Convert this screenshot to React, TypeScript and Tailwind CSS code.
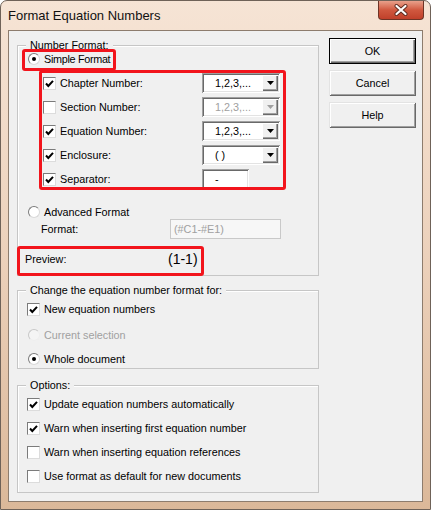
import React from "react";

const sunken =
  "shadow-[inset_1px_1px_0_#a0a0a0,inset_-1px_-1px_0_#ffffff,inset_2px_2px_0_#696969,inset_-2px_-2px_0_#e3e3e3]";

function CheckBox({ checked }: { checked?: boolean }) {
  return (
    <span className="w-[13px] h-[13px] shrink-0 bg-white border border-t-[#7b7b7b] border-l-[#7b7b7b] border-r-[#dcdcdc] border-b-[#dcdcdc] flex items-center justify-center">
      {checked && (
        <svg width="11" height="11" viewBox="0 0 11 11">
          <polyline points="2,5.5 4.3,8 9,2.8" fill="none" stroke="#000" strokeWidth="2" />
        </svg>
      )}
    </span>
  );
}

function Radio({ checked, disabled }: { checked?: boolean; disabled?: boolean }) {
  return (
    <span
      className={
        "w-[12px] h-[12px] shrink-0 rounded-full border flex items-center justify-center " +
        (disabled
          ? "bg-[#f4f4f4] border-t-[#c8c8c8] border-l-[#c8c8c8] border-r-[#eeeeee] border-b-[#eeeeee]"
          : "bg-white border-t-[#7b7b7b] border-l-[#7b7b7b] border-r-[#d8d8d8] border-b-[#d8d8d8]")
      }
    >
      {checked && <span className="w-[4px] h-[4px] rounded-full bg-black" />}
    </span>
  );
}

function Combo({ value, disabled }: { value: string; disabled?: boolean }) {
  return (
    <div className={"w-[78px] h-[20px] bg-white flex items-center p-[2px] " + sunken}>
      <span className={"flex-1 pl-[11px] " + (disabled ? "text-[#a0a0a0]" : "text-black")}>{value}</span>
      <span className="w-[16px] h-[16px] bg-[#f0f0f0] flex items-center justify-center shadow-[inset_1px_1px_0_#ffffff,inset_-1px_-1px_0_#696969,inset_-2px_-2px_0_#a0a0a0]">
        <svg width="7" height="4" viewBox="0 0 7 4">
          <polygon points="0,0 7,0 3.5,4" fill={disabled ? "#a0a0a0" : "#000"} />
        </svg>
      </span>
    </div>
  );
}

function Button({ label, isDefault }: { label: string; isDefault?: boolean }) {
  return (
    <div
      className={
        "h-[26px] w-[87px] flex items-center justify-center bg-[#f0f0f0] text-black " +
        (isDefault
          ? "border border-black shadow-[inset_1px_1px_0_#ffffff,inset_-1px_-1px_0_#696969,inset_-2px_-2px_0_#a0a0a0]"
          : "shadow-[inset_1px_1px_0_#e3e3e3,inset_-1px_-1px_0_#696969,inset_2px_2px_0_#ffffff,inset_-2px_-2px_0_#a0a0a0]")
      }
    >
      {label}
    </div>
  );
}

function Group({ title, h, children }: { title: string; h: string; children: React.ReactNode }) {
  return (
    <div className={"relative border border-[#c6c6c6] shadow-[inset_1px_1px_0_#ffffff] " + h}>
      <span className="absolute -top-[8px] left-[8px] px-[4px] bg-[#f0f0f0] leading-[14px]">{title}</span>
      {children}
    </div>
  );
}

const rows = [
  { label: "Chapter Number:", checked: true, combo: "1,2,3,..." },
  { label: "Section Number:", checked: false, combo: "1,2,3,...", disabled: true },
  { label: "Equation Number:", checked: true, combo: "1,2,3,..." },
  { label: "Enclosure:", checked: true, combo: "( )" },
  { label: "Separator:", checked: true, text: "-" },
];

const options = [
  { label: "Update equation numbers automatically", checked: true },
  { label: "Warn when inserting first equation number", checked: true },
  { label: "Warn when inserting equation references", checked: false },
  { label: "Use format as default for new documents", checked: false },
];

export default function App() {
  return (
    <div className="relative w-[431px] h-[510px] overflow-hidden font-['Liberation_Sans',Arial,sans-serif] text-[10.8px] text-black bg-white">
      <div className="flex flex-col h-full rounded-t-[7px] border border-[#6f6258] bg-gradient-to-b from-[#f6e4d5] via-[#ecd1bb] to-[#dbb899]">
        {/* title bar */}
        <div className="h-[29px] shrink-0 flex items-start">
          <span className="self-center pl-[7px] text-[13px] text-[#111]">Format Equation Numbers</span>
          <div className="ml-auto mr-[6px] w-[46px] h-[19px] rounded-b-[4px] border border-t-0 border-[#6e3426] bg-gradient-to-b from-[#e8a08b] via-[#d0583f] to-[#c0402a] flex items-center justify-center">
            <svg width="14" height="12" viewBox="0 0 14 12">
              <path d="M2.5 2 L11.5 10 M11.5 2 L2.5 10" stroke="#5b2a1f" strokeWidth="4" strokeLinecap="round" />
              <path d="M2.5 2 L11.5 10 M11.5 2 L2.5 10" stroke="#ffffff" strokeWidth="2.2" strokeLinecap="round" />
            </svg>
          </div>
        </div>

        {/* client area */}
        <div className="flex-1 mx-[7px] mb-[7px] border border-[#8d7c6d] bg-[#f0f0f0] flex pl-[8px] pt-[7px]">
          <div className="w-[302px] mt-[7px] flex flex-col">
            <Group title="Number Format:" h="h-[231px]">
              <div className="pt-[3px] flex flex-col">
                <div className="h-[20px] pl-[10px] flex items-center gap-[4px]">
                  <Radio checked />
                  <span className="tracking-[-0.3px]">Simple Format</span>
                </div>
                <div className="mt-[2px] flex flex-col">
                  {rows.map((r) => (
                    <div key={r.label} className="h-[24px] pl-[25px] flex items-center">
                      <CheckBox checked={r.checked} />
                      <span className="w-[146px] pl-[4px]">{r.label}</span>
                      {r.combo ? (
                        <Combo value={r.combo} disabled={r.disabled} />
                      ) : (
                        <div className={"w-[47px] h-[20px] bg-white flex items-center pl-[13px] " + sunken}>{r.text}</div>
                      )}
                    </div>
                  ))}
                </div>
                <div className="mt-[14px] h-[14px] pl-[10px] flex items-center gap-[4px]">
                  <Radio />
                  <span>Advanced Format</span>
                </div>
                <div className="h-[20px] pl-[23px] flex items-center">
                  <span className="w-[129px]">Format:</span>
                  <div className="w-[111px] h-[20px] bg-[#f7f7f7] border border-[#c9c9c9] flex items-center pl-[3px] text-[#a0a0a0]">
                    (#C1-#E1)
                  </div>
                </div>
                <div className="mt-[10px] h-[20px] pl-[7px] flex items-center">
                  <span className="w-[143px]">Preview:</span>
                  <span className="text-[14px]">(1-1)</span>
                </div>
              </div>
            </Group>

            <div className="mt-[14px]">
              <Group title="Change the equation number format for:" h="h-[79px]">
                <div className="pt-[10px] flex flex-col">
                  <div className="h-[16px] pl-[9px] flex items-center gap-[4px]">
                    <CheckBox checked />
                    <span>New equation numbers</span>
                  </div>
                  <div className="mt-[10px] h-[16px] pl-[10px] flex items-center gap-[4px]">
                    <Radio disabled />
                    <span className="text-[#a0a0a0]">Current selection</span>
                  </div>
                  <div className="mt-[8px] h-[16px] pl-[10px] flex items-center gap-[4px]">
                    <Radio checked />
                    <span>Whole document</span>
                  </div>
                </div>
              </Group>
            </div>

            <div className="mt-[16px]">
              <Group title="Options:" h="h-[108px]">
                <div className="pt-[6px] flex flex-col">
                  {options.map((o) => (
                    <div key={o.label} className="h-[24px] pl-[9px] flex items-center gap-[4px]">
                      <CheckBox checked={o.checked} />
                      <span>{o.label}</span>
                    </div>
                  ))}
                </div>
              </Group>
            </div>
          </div>

          <div className="ml-[10px] flex flex-col gap-[6px]">
            <Button label="OK" isDefault />
            <Button label="Cancel" />
            <Button label="Help" />
          </div>
        </div>
      </div>

      {/* red annotation boxes */}
      <div className="absolute left-[22px] top-[49px] w-[94px] h-[22px] border-[3px] border-[#f2141c] rounded-[3px]" />
      <div className="absolute left-[39px] top-[70px] w-[247px] h-[120px] border-[3px] border-[#f2141c] rounded-[3px]" />
      <div className="absolute left-[17px] top-[246px] w-[187px] h-[30px] border-[3px] border-[#f2141c] rounded-[3px]" />
    </div>
  );
}
